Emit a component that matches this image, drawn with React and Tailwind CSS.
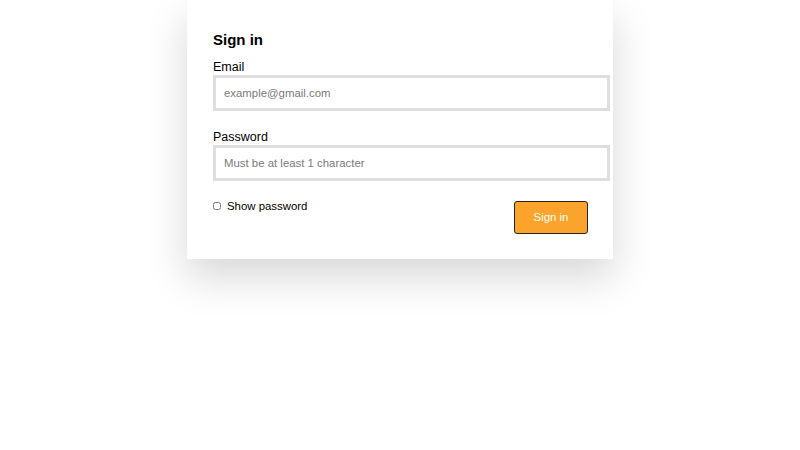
import React, { useState } from 'react';

const SignIn = () => {
  const [email, setEmail] = useState('');
  const [password, setPassword] = useState('');
  const [show, setShow] = useState(false);

  return (
    <div className="w-[426px] mx-auto bg-white pl-[26px] pr-[25px] pt-[29px] pb-[25px] shadow-[0_18px_40px_rgba(0,0,0,0.16)]">
      <h2 className="text-[15px] font-bold leading-[22px] text-black">Sign in</h2>
      <form onSubmit={(e) => e.preventDefault()}>
        <label htmlFor="email" className="block mt-[8px] text-[12.5px] leading-[16px] text-black">Email</label>
        <input
          type="email"
          id="email"
          value={email}
          onChange={(e) => setEmail(e.target.value)}
          placeholder="example@gmail.com"
          className="box-content block w-full h-[30px] px-[8px] border-[3px] border-[#dedede] text-[11.4px] text-black placeholder:text-[#7a7a7a] outline-none"
        />

        <label htmlFor="password" className="block mt-[18px] text-[12.5px] leading-[16px] text-black">Password</label>
        <input
          type={show ? 'text' : 'password'}
          id="password"
          value={password}
          onChange={(e) => setPassword(e.target.value)}
          placeholder="Must be at least 1 character"
          className="box-content block w-full h-[30px] px-[8px] border-[3px] border-[#dedede] text-[11.4px] text-black placeholder:text-[#7a7a7a] outline-none"
        />

        <div className="flex justify-between items-start mt-[18px]">
          <label className="flex items-center gap-[6px] text-[11.4px] leading-[14px] text-black">
            <input type="checkbox" checked={show} onChange={(e) => setShow(e.target.checked)} className="w-[8px] h-[8px] m-0" />
            Show password
          </label>
          <button
            type="submit"
            className="mt-[2px] w-[74px] h-[33px] bg-[#fba42b] border border-[#2a2118] rounded-[3px] text-white text-[11.4px]"
          >
            Sign in
          </button>
        </div>
      </form>
    </div>
  );
};

export default function App() {
  return (
    <div className="min-h-[450px] bg-white font-['Liberation_Sans',Arial,sans-serif]">
      <SignIn />
    </div>
  );
}
